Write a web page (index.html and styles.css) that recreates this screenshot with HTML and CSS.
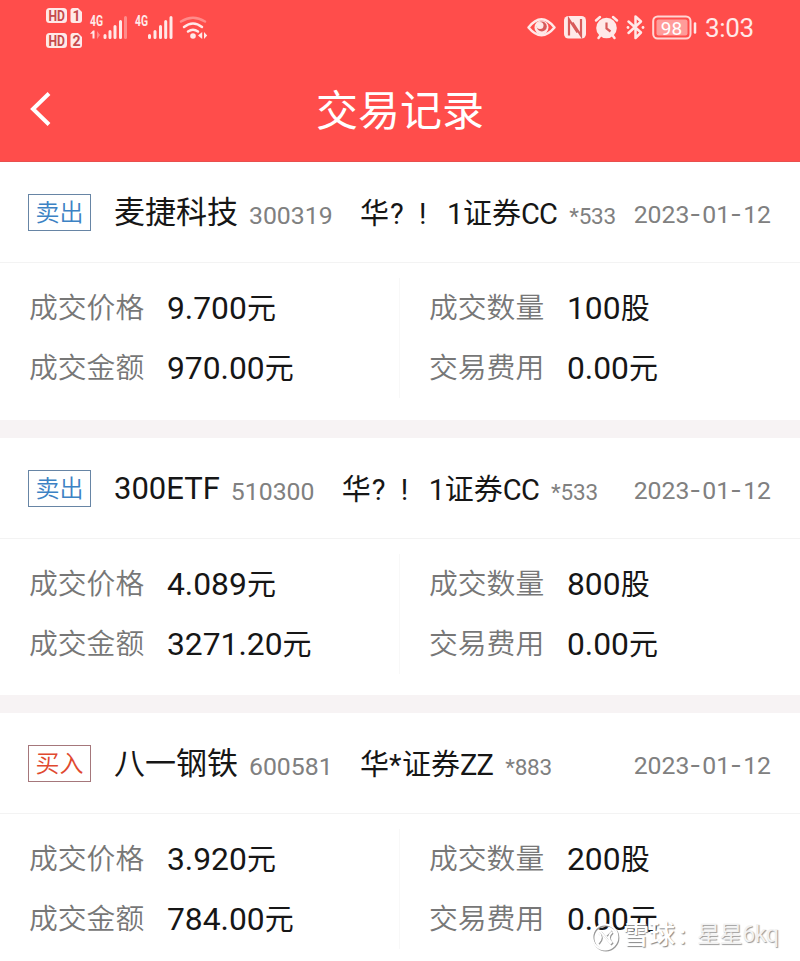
FILE: index.html
```
<!DOCTYPE html>
<html lang="zh-CN">
<head>
    <meta charset="UTF-8">
    <meta name="viewport" content="width=device-width, initial-scale=1.0">
    <title>交易记录</title>
    <link rel="stylesheet" href="styles.css">
</head>
<body>
    <header class="header">
        <div class="status-bar">
            <svg class="status-left" width="170" height="56" viewBox="40 0 170 56">
                <!-- HD badges -->
                <g class="fill">
                    <rect x="46" y="8" width="21" height="15" rx="3.5"/>
                    <path d="M73 8h5l4 4v8a3 3 0 0 1-3 3h-6a2.500 2.500 0 0 1-2.500-2.500v-10a2.500 2.500 0 0 1 2.500-2.500z"/>
                    <rect x="46" y="33" width="21" height="15" rx="3.5"/>
                    <path d="M73 33h5l4 4v8a3 3 0 0 1-3 3h-6a2.500 2.500 0 0 1-2.500-2.500v-10a2.500 2.500 0 0 1 2.500-2.500z"/>
                </g>
                <g class="badge-text">
                    <text x="48.500" y="20.500" textLength="16.500" lengthAdjust="spacingAndGlyphs">HD</text>
                    <text x="72.500" y="20.500">1</text>
                    <text x="48.500" y="45.500" textLength="16.500" lengthAdjust="spacingAndGlyphs">HD</text>
                    <text x="72.500" y="45.500">2</text>
                </g>
                <!-- signal -->
                <g class="net-text">
                    <text x="90" y="26" textLength="13" lengthAdjust="spacingAndGlyphs">4G</text>
                    <text x="135" y="26" textLength="13" lengthAdjust="spacingAndGlyphs">4G</text>
                </g>
                <g class="bars">
                    <path d="M105 35.500v2M110 31.500v6M115 26.500v11M120.500 21.500v16"/>
                    <path class="dim" d="M125.500 17.500v20"/>
                    <path d="M149.500 35.500v2M155 31.500v6M160.500 26.500v11M165.700 21.500v16M171 17.500v20"/>
                </g>
                <path class="fill" d="M90 34l3-3.500h1.500v8h-2v-5z"/>
                <path class="fill dim" d="M97 31l3 4-3 4z"/>
                <!-- wifi -->
                <g class="line">
                    <path class="dim" d="M181 21.500q12-7.500 24 0"/>
                    <path d="M184 27q9-7 18 0M188 31.500q5-3.500 10 0"/>
                </g>
                <circle class="fill" cx="193" cy="36" r="2.800"/>
                <path class="fill" d="M198 35.500l4.200-3.500v7zM204 32l3.200 3.500-3.200 3.500z"/>
            </svg>
            <div class="status-right">
                <svg width="172" height="56" viewBox="526 0 172 56">
                    <!-- eye -->
                    <path class="line" d="M528.500 27.500q13-16.500 26 0q-13 15.500-26 0z"/>
                    <circle class="fill" cx="541.500" cy="27.500" r="7"/>
                    <circle class="cut" cx="541.800" cy="26.500" r="5"/>
                    <circle class="fill" cx="540" cy="25.500" r="3.500"/>
                    <!-- nfc -->
                    <rect class="fill" x="564" y="16" width="22" height="22.500" rx="4.500"/>
                    <path class="cut-line" d="M569 35.500V19.500l8.500 13M581 19v16.500l-8.500-13"/>
                    <!-- alarm -->
                    <circle class="fill" cx="606.500" cy="28" r="10.300"/>
                    <path class="line" d="M596 20.500l4-3.500M617 20.500l-4-3.500M600 36l-1.500 2M613 36l1.500 2"/>
                    <path class="cut-line" d="M606.500 22.500v6l4 3"/>
                    <!-- bluetooth -->
                    <path class="line" d="M628.500 21.500l12.500 11-5.500 5.500V16.500l5.500 5-12.500 11.500"/>
                    <circle class="fill" cx="628" cy="27.500" r="1.400"/>
                    <circle class="fill" cx="643" cy="27.500" r="1.400"/>
                    <!-- battery -->
                    <rect class="battery" x="653.200" y="16.500" width="37.300" height="22" rx="4.500"/>
                    <rect class="charge" x="656.500" y="19.500" width="31" height="16" rx="2"/>
                    <path class="line" d="M695 23.500v9"/>
                    <text class="battery-text" x="671.500" y="34.500" text-anchor="middle">98</text>
                </svg>
                <span class="time">3:03</span>
            </div>
        </div>
        <div class="title-bar">
            <svg class="back" width="24" height="40" viewBox="0 0 24 40">
                <path d="M21 4.500L5 20l16 15.500"/>
            </svg>
            <h1>交易记录</h1>
        </div>
    </header>

    <main>
        <section class="record">
            <div class="record-head">
                <span class="tag sell">卖出</span>
                <span class="stock">麦捷科技</span>
                <span class="code">300319</span>
                <span class="broker">华<span class="question">?</span><span class="exclaim">!</span><span class="one">1</span>证券<span class="latin">CC</span></span>
                <span class="account">*533</span>
                <span class="date">2023<i>-</i>01<i>-</i>12</span>
            </div>
            <div class="record-body">
                <dl>
                    <dt>成交价格</dt><dd><b>9.700</b>元</dd>
                    <dt>成交金额</dt><dd><b>970.00</b>元</dd>
                </dl>
                <dl>
                    <dt>成交数量</dt><dd><b>100</b>股</dd>
                    <dt>交易费用</dt><dd><b>0.00</b>元</dd>
                </dl>
            </div>
        </section>

        <section class="record">
            <div class="record-head">
                <span class="tag sell">卖出</span>
                <span class="stock">300ETF</span>
                <span class="code">510300</span>
                <span class="broker">华<span class="question">?</span><span class="exclaim">!</span><span class="one">1</span>证券<span class="latin">CC</span></span>
                <span class="account">*533</span>
                <span class="date">2023<i>-</i>01<i>-</i>12</span>
            </div>
            <div class="record-body">
                <dl>
                    <dt>成交价格</dt><dd><b>4.089</b>元</dd>
                    <dt>成交金额</dt><dd><b>3271.20</b>元</dd>
                </dl>
                <dl>
                    <dt>成交数量</dt><dd><b>800</b>股</dd>
                    <dt>交易费用</dt><dd><b>0.00</b>元</dd>
                </dl>
            </div>
        </section>

        <section class="record">
            <div class="record-head">
                <span class="tag buy">买入</span>
                <span class="stock">八一钢铁</span>
                <span class="code">600581</span>
                <span class="broker">华<span class="star">*</span>证券<span class="latin">ZZ</span></span>
                <span class="account">*883</span>
                <span class="date">2023<i>-</i>01<i>-</i>12</span>
            </div>
            <div class="record-body">
                <dl>
                    <dt>成交价格</dt><dd><b>3.920</b>元</dd>
                    <dt>成交金额</dt><dd><b>784.00</b>元</dd>
                </dl>
                <dl>
                    <dt>成交数量</dt><dd><b>200</b>股</dd>
                    <dt>交易费用</dt><dd><b>0.00</b>元</dd>
                </dl>
            </div>
        </section>
    </main>

    <div class="watermark">
        <svg width="30" height="30" viewBox="0 0 30 30">
            <g class="mark-shadow">
                <circle cx="16" cy="16" r="12.500"/>
                <path d="M9 11q6 5 0 11M23 11q-6 5 0 11M11 10l11 13M22 9l-5 5"/>
            </g>
            <g class="mark">
                <circle cx="15" cy="15" r="12.500"/>
                <path d="M8 10q6 5 0 11M22 10q-6 5 0 11M10 9l11 13M21 8l-5 5"/>
            </g>
        </svg>
        <span class="brand">雪球<span class="colon">:</span></span><span class="user">星星6kq</span>
    </div>
</body>
</html>
```
FILE: styles.css
```
* {
    box-sizing: border-box;
}
body {
    margin: 0;
    width: 800px;
    height: 961px;
    overflow: hidden;
    position: relative;
    background-color: #fff;
    color: #161616;
    font-family: Roboto, "Noto Sans CJK SC", sans-serif;
}
.header {
    height: 162px;
    background-color: #ff4d4b;
    border-bottom: 1px solid #e8504e;
    color: #fff;
}
.status-bar {
    display: flex;
    justify-content: space-between;
    height: 56px;
    padding: 0 46px 0 40px;
}
.status-right {
    display: flex;
    align-items: center;
}
.time {
    width: 56px;
    padding-left: 7px;
    font-size: 26px;
    line-height: 58px;
    letter-spacing: -0.3px;
    white-space: nowrap;
    color: #ffe9e8;
}
.fill {
    fill: #ffe9e8;
}
.line {
    fill: none;
    stroke: #ffe9e8;
    stroke-width: 2.5;
    stroke-linecap: round;
    stroke-linejoin: round;
}
.bars {
    stroke: #ffe9e8;
    stroke-width: 3;
    stroke-linecap: round;
}
.dim {
    opacity: 0.4;
}
.cut {
    fill: #d85a5a;
}
.cut-line {
    fill: none;
    stroke: #d85a5a;
    stroke-width: 2.2;
}
.badge-text {
    fill: #c64a4c;
    font-size: 14px;
    font-weight: 700;
}
.net-text {
    fill: #ffe9e8;
    font-size: 14px;
    font-weight: 700;
}
.battery {
    fill: none;
    stroke: #ffd6d4;
    stroke-width: 2;
}
.charge {
    fill: #ff9c9a;
}
.battery-text {
    fill: #fff;
    font-size: 19px;
}
.title-bar {
    display: grid;
    grid-template-columns: 100px 1fr 100px;
    align-items: center;
    height: 105px;
}
.back {
    margin-left: 28px;
    fill: none;
    stroke: #fff;
    stroke-width: 4;
}
h1 {
    margin: 7px 0 0;
    font-size: 42px;
    font-weight: 400;
    line-height: 60px;
    text-align: center;
}
.record {
    height: 275.5px;
    border-bottom: 18px solid #f7f3f4;
}
.record-head {
    display: flex;
    align-items: baseline;
    height: 101px;
    padding: 28px 29px 0 28px;
    border-bottom: 1px solid #f3f3f3;
    line-height: 46px;
    white-space: nowrap;
}
.tag {
    width: 63px;
    height: 37px;
    margin-right: 23px;
    border: 1px solid;
    font-size: 24px;
    font-weight: 350;
    line-height: 37px;
    text-align: center;
    transform: translateY(-2px);
}
.sell {
    border-color: #6785a5;
    color: #3c82c4;
}
.buy {
    border-color: #a5777b;
    color: #e0492f;
}
.stock {
    font-size: 31px;
}
.code {
    width: 83px;
    margin-left: 11px;
    font-size: 24.8px;
    color: #808080;
    transform: translateY(1px);
}
.broker {
    display: flex;
    align-items: baseline;
    margin-left: 28px;
    font-size: 29px;
    transform: translateY(1px);
}
.question {
    width: 29px;
    padding-left: 1px;
}
.exclaim {
    width: 29px;
    padding-left: 1px;
}
.one {
    width: 16px;
}
.star {
    width: 13px;
}
.latin {
    letter-spacing: -0.8px;
}
.account {
    margin-left: 12px;
    font-size: 22.5px;
    letter-spacing: -0.2px;
    color: #808080;
    transform: translateY(1px);
}
.date {
    margin-left: auto;
    font-size: 24.8px;
    color: #808080;
}
.date i {
    font-family: Inter, sans-serif;
    font-style: normal;
    letter-spacing: 1.5px;
}
.record-body {
    display: flex;
    height: 156px;
    padding: 15px 0 19px;
}
dl {
    display: grid;
    grid-template-columns: 138px 1fr;
    grid-auto-rows: 60px;
    width: 400px;
    height: 120px;
    margin: 0;
    padding-left: 29px;
    line-height: 60px;
}
dl:first-child {
    border-right: 1px solid #f8f8f8;
}
dt {
    font-size: 28.8px;
    font-weight: 350;
    color: #777;
}
dd {
    margin: 0;
    font-size: 29px;
    white-space: nowrap;
}
dd b {
    font-size: 31.8px;
    font-weight: 400;
}
.watermark {
    position: absolute;
    left: 590px;
    top: 922px;
    display: flex;
    align-items: center;
    height: 30px;
    line-height: 26px;
    font-size: 26px;
    white-space: nowrap;
}
.brand {
    width: 74px;
    margin-left: 3px;
    font-weight: 500;
    color: #fff;
    text-shadow: 1px 1px 1px #888;
    transform: translateY(-2px);
}
.colon {
    margin-left: 4px;
}
.user {
    font-size: 23px;
    letter-spacing: -0.4px;
    color: #f2f2f2;
    text-shadow: 1px 1px 1px #999;
    transform: translateY(-2px);
}
.mark, .mark-shadow {
    fill: none;
    stroke: #fff;
    stroke-width: 1.8;
}
.mark-shadow {
    stroke: #999;
}
```
